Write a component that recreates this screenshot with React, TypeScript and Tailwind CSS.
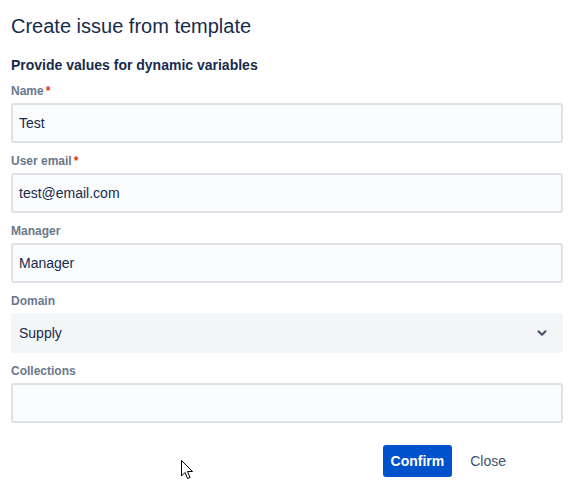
import { ChevronDown } from 'lucide-react';

const fields = [
  { label: 'Name', value: 'Test', required: true },
  { label: 'User email', value: 'test@email.com', required: true },
  { label: 'Manager', value: 'Manager', required: false },
];

function Label({ text, required }: { text: string; required?: boolean }) {
  return (
    <label className="block h-[16px] mb-[4px] text-[12px] leading-[16px] font-semibold text-[#6b778c]">
      {text}
      {required && <span className="ml-[2px] text-[#de350b]">*</span>}
    </label>
  );
}

export default function App() {
  return (
    <div
      className="relative w-[574px] h-[495px] bg-white pl-[11px] pr-[11px] pt-[13px]"
      style={{ fontFamily: '"Liberation Sans", Arial, sans-serif' }}
    >
      <h1 className="text-[20px] leading-[26px] text-[#172b4d]">
        Create issue from template
      </h1>
      <h2 className="mt-[16px] text-[14px] leading-[20px] font-semibold text-[#172b4d]">
        Provide values for dynamic variables
      </h2>

      <div className="mt-[8px]">
        {fields.map((f) => (
          <div key={f.label} className="mb-[10px]">
            <Label text={f.label} required={f.required} />
            <div className="h-[40px] flex items-center px-[6px] border-2 border-[#dfe1e6] bg-[#fafbfc] rounded-[3px] text-[14px] text-[#172b4d]">
              {f.value}
            </div>
          </div>
        ))}

        <div className="mb-[10px]">
          <Label text="Domain" />
          <div className="h-[40px] flex items-center justify-between pl-[8px] pr-[14px] bg-[#f4f5f7] rounded-[3px] text-[14px] text-[#172b4d]">
            <span>Supply</span>
            <ChevronDown className="w-[14px] h-[14px] text-[#42526e]" strokeWidth={3.5} />
          </div>
        </div>

        <div>
          <Label text="Collections" />
          <div className="h-[40px] border-2 border-[#dfe1e6] bg-[#fafbfc] rounded-[3px]" />
        </div>
      </div>

      <div className="mt-[22px] flex justify-end items-center gap-[6px] pr-[45px]">
        <button className="h-[32px] px-[8px] rounded-[3px] bg-[#0052cc] text-white text-[14px] font-semibold">
          Confirm
        </button>
        <button className="h-[32px] px-[12px] rounded-[3px] text-[#42526e] text-[14px]">
          Close
        </button>
      </div>

      <svg
        className="absolute left-[181px] top-[460px]"
        width="13"
        height="21"
        viewBox="0 0 13 21"
      >
        <path
          d="M0.5 0.5 L0.5 16 L4 12.5 L6.5 18.5 L9 17.5 L6.5 11.5 L11.5 11.5 Z"
          fill="white"
          stroke="black"
          strokeWidth="1"
          strokeLinejoin="miter"
        />
      </svg>
    </div>
  );
}
